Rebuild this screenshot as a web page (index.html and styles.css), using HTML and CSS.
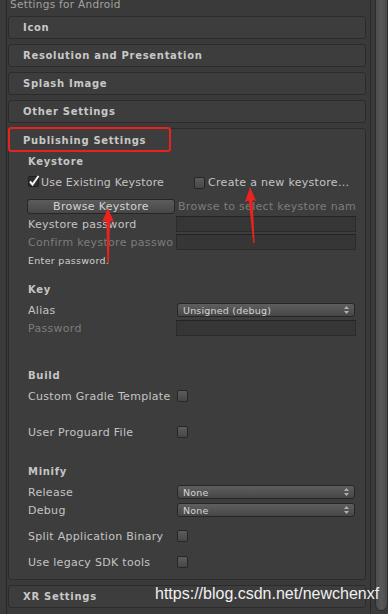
FILE: index.html
```html
<!DOCTYPE html>
<html>
<head>
<meta charset="utf-8">
<link rel="stylesheet" href="styles.css">
</head>
<body>
<div class="page">
  <div class="gutter"></div>
  <div class="main">
    <div class="title">Settings for Android</div>
    <div class="fold">Icon</div>
    <div class="fold">Resolution and Presentation</div>
    <div class="fold">Splash Image</div>
    <div class="fold">Other Settings</div>
    <div class="section">
      <div class="section-head">Publishing Settings<div class="highlight"></div></div>
      <div class="section-body">
        <div class="group group-keystore">
          <div class="heading">Keystore</div>
          <div class="row row-checks">
            <div class="check-item check-first">
              <svg class="checked" width="13" height="13" viewBox="0 0 13 13"><rect x="0.5" y="1.5" width="10" height="10" rx="1.5" fill="#2f2f2f" stroke="#1f1f1f"/><path d="M2 6.5 L4.5 9.5 L10.5 1" fill="none" stroke="#f4f4f4" stroke-width="2"/></svg>
              <span>Use Existing Keystore</span>
            </div>
            <div class="check-item">
              <span class="toggle"></span>
              <span>Create a new keystore...</span>
            </div>
          </div>
          <div class="row row-browse">
            <div class="button">Browse Keystore</div>
            <div class="hint">Browse to select keystore nam</div>
          </div>
          <div class="row">
            <div class="label">Keystore password</div>
            <div class="field"></div>
          </div>
          <div class="row">
            <div class="label disabled">Confirm keystore passwo</div>
            <div class="field"></div>
          </div>
          <div class="row small">Enter password.</div>
        </div>

        <div class="group group-key">
          <div class="heading">Key</div>
          <div class="row">
            <div class="label">Alias</div>
            <div class="popup"><span>Unsigned (debug)</span><svg width="5" height="8" viewBox="0 0 5 8"><path d="M2.5 0 L5 3 L0 3 Z M2.5 8 L5 5 L0 5 Z" fill="#b0b0b0"/></svg></div>
          </div>
          <div class="row">
            <div class="label disabled">Password</div>
            <div class="field"></div>
          </div>
        </div>

        <div class="group group-build">
          <div class="heading">Build</div>
          <div class="row">
            <div class="label">Custom Gradle Template</div>
            <span class="toggle toggle-field"></span>
          </div>
          <div class="row row-spaced">
            <div class="label">User Proguard File</div>
            <span class="toggle toggle-field"></span>
          </div>
        </div>

        <div class="group group-minify">
          <div class="heading">Minify</div>
          <div class="row">
            <div class="label">Release</div>
            <div class="popup"><span>None</span><svg width="5" height="8" viewBox="0 0 5 8"><path d="M2.5 0 L5 3 L0 3 Z M2.5 8 L5 5 L0 5 Z" fill="#b0b0b0"/></svg></div>
          </div>
          <div class="row">
            <div class="label">Debug</div>
            <div class="popup"><span>None</span><svg width="5" height="8" viewBox="0 0 5 8"><path d="M2.5 0 L5 3 L0 3 Z M2.5 8 L5 5 L0 5 Z" fill="#b0b0b0"/></svg></div>
          </div>
          <div class="row row-loose">
            <div class="label">Split Application Binary</div>
            <span class="toggle toggle-field"></span>
          </div>
          <div class="row row-loose">
            <div class="label">Use legacy SDK tools</div>
            <span class="toggle toggle-field"></span>
          </div>
        </div>
      </div>
    </div>
    <div class="fold">XR Settings</div>
  </div>
  <div class="rail"></div>
  <div class="scrollbar"></div>

  <svg class="arrows" width="388" height="614" viewBox="0 0 388 614">
    <path d="M108 208 L114 222 L110 221 L108.9 263 L107.4 263 L106.3 221 L102 222 Z" fill="#ea2320"/>
    <path d="M250 187 L256 201 L252.6 200 L254.6 243 L253.2 243 L248.8 200.5 L245 202 Z" fill="#ea2320"/>
  </svg>
  <div class="watermark">https://blog.csdn.net/newchenxf</div>
</div>
</body>
</html>
```

FILE: styles.css
```css
* { box-sizing: border-box; }

body {
  margin: 0;
  background: #3a3a3a;
  font-family: "DejaVu Sans", "Noto Sans", sans-serif;
}

.page {
  position: relative;
  width: 388px;
  height: 614px;
  overflow: hidden;
  display: flex;
  background: #3a3a3a;
}

.gutter {
  flex: none;
  width: 7px;
  margin-right: 1px;
  border-right: 1px solid #272727;
}

.main {
  flex: none;
  width: 358px;
}

.rail {
  flex: none;
  width: 5px;
  border-right: 1px solid #282828;
}

.scrollbar {
  flex: none;
  width: 13px;
  height: 611px;
  margin-left: 4px;
  border: 1px solid #2c2c2c;
  border-top: none;
  border-radius: 0 0 7px 7px;
  background: linear-gradient(90deg, #4c4c4c, #585858 50%, #4a4a4a);
}

.title {
  height: 13px;
  line-height: 13px;
  margin-top: -2px;
  margin-bottom: 5px;
  padding-left: 2px;
  font-size: 10.5px;
  letter-spacing: 0.3px;
  color: #a2a2a2;
}

.fold,
.section {
  border: 1px solid #2b2b2b;
  border-radius: 3px;
  background: #3d3d3d;
  margin-bottom: 5px;
}

.fold,
.section-head {
  height: 23px;
  display: flex;
  align-items: center;
  padding-left: 14px;
  font-size: 10px;
  font-weight: bold;
  letter-spacing: 0.7px;
  color: #c8c8c8;
}

.section-head {
  position: relative;
  height: 22px;
}

.highlight {
  position: absolute;
  left: -1px;
  top: -2px;
  width: 163px;
  height: 25px;
  border: 2px solid #e8231f;
  border-radius: 3px;
}

.section-body {
  padding: 0 9px 8px 19px;
}

.heading {
  height: 16px;
  line-height: 16px;
  margin-bottom: 3px;
  font-size: 10px;
  font-weight: bold;
  letter-spacing: 0.7px;
  color: #c6c6c6;
}

.group-keystore { margin-top: 3px; }
.group-key { margin-top: 13px; }
.group-build { margin-top: 31px; }
.group-minify { margin-top: 23px; }

.row {
  display: flex;
  align-items: center;
  height: 18px;
  font-size: 11px;
  letter-spacing: 0.3px;
  color: #c4c4c4;
  white-space: nowrap;
}

.row-checks { height: 19px; margin-bottom: 5px; }
.row-spaced { margin-top: 18px; }
.row-loose { margin-top: 8px; }

.check-item {
  display: flex;
  align-items: center;
  gap: 3px;
}

.check-first {
  width: 166px;
  gap: 0;
  letter-spacing: 0.2px;
}

.checked { flex: none; margin-top: -2px; }

.toggle {
  flex: none;
  display: block;
  width: 11px;
  height: 12px;
  border: 1px solid #262626;
  border-radius: 2px;
  background: linear-gradient(#5c5c5c, #474747);
}

.toggle-field { margin-left: 1px; }

.label {
  flex: none;
  width: 148px;
  overflow: hidden;
}

.disabled,
.hint { color: #7c7c7c; }

.field {
  flex: 1;
  height: 16px;
  background: #363636;
  border: 1px solid #2b2b2b;
  border-top-color: #232323;
}

.button {
  flex: none;
  width: 148px;
  height: 15px;
  margin-left: -1px;
  display: flex;
  align-items: center;
  justify-content: center;
  border: 1px solid #262626;
  border-radius: 3px;
  background: linear-gradient(#5c5c5c, #474747);
  color: #d2d2d2;
}

.hint {
  margin-left: 3px;
  overflow: hidden;
  flex: 1;
}

.small {
  font-size: 9.5px;
  color: #d0d0d0;
}

.popup {
  flex: 1;
  height: 14px;
  margin: 0 1px;
  padding: 0 5px 0 5px;
  display: flex;
  align-items: center;
  justify-content: space-between;
  border: 1px solid #262626;
  border-radius: 3px;
  background: linear-gradient(#5e5e5e, #474747);
  font-size: 9.5px;
  letter-spacing: 0.2px;
  color: #d4d4d4;
}

.arrows {
  position: absolute;
  left: 0;
  top: 0;
  pointer-events: none;
}

.watermark {
  position: absolute;
  left: 155px;
  top: 585px;
  line-height: 18px;
  font-family: "Liberation Sans", Arial, sans-serif;
  font-size: 16px;
  letter-spacing: 0;
  color: #f0f0f0;
  white-space: nowrap;
}
```
